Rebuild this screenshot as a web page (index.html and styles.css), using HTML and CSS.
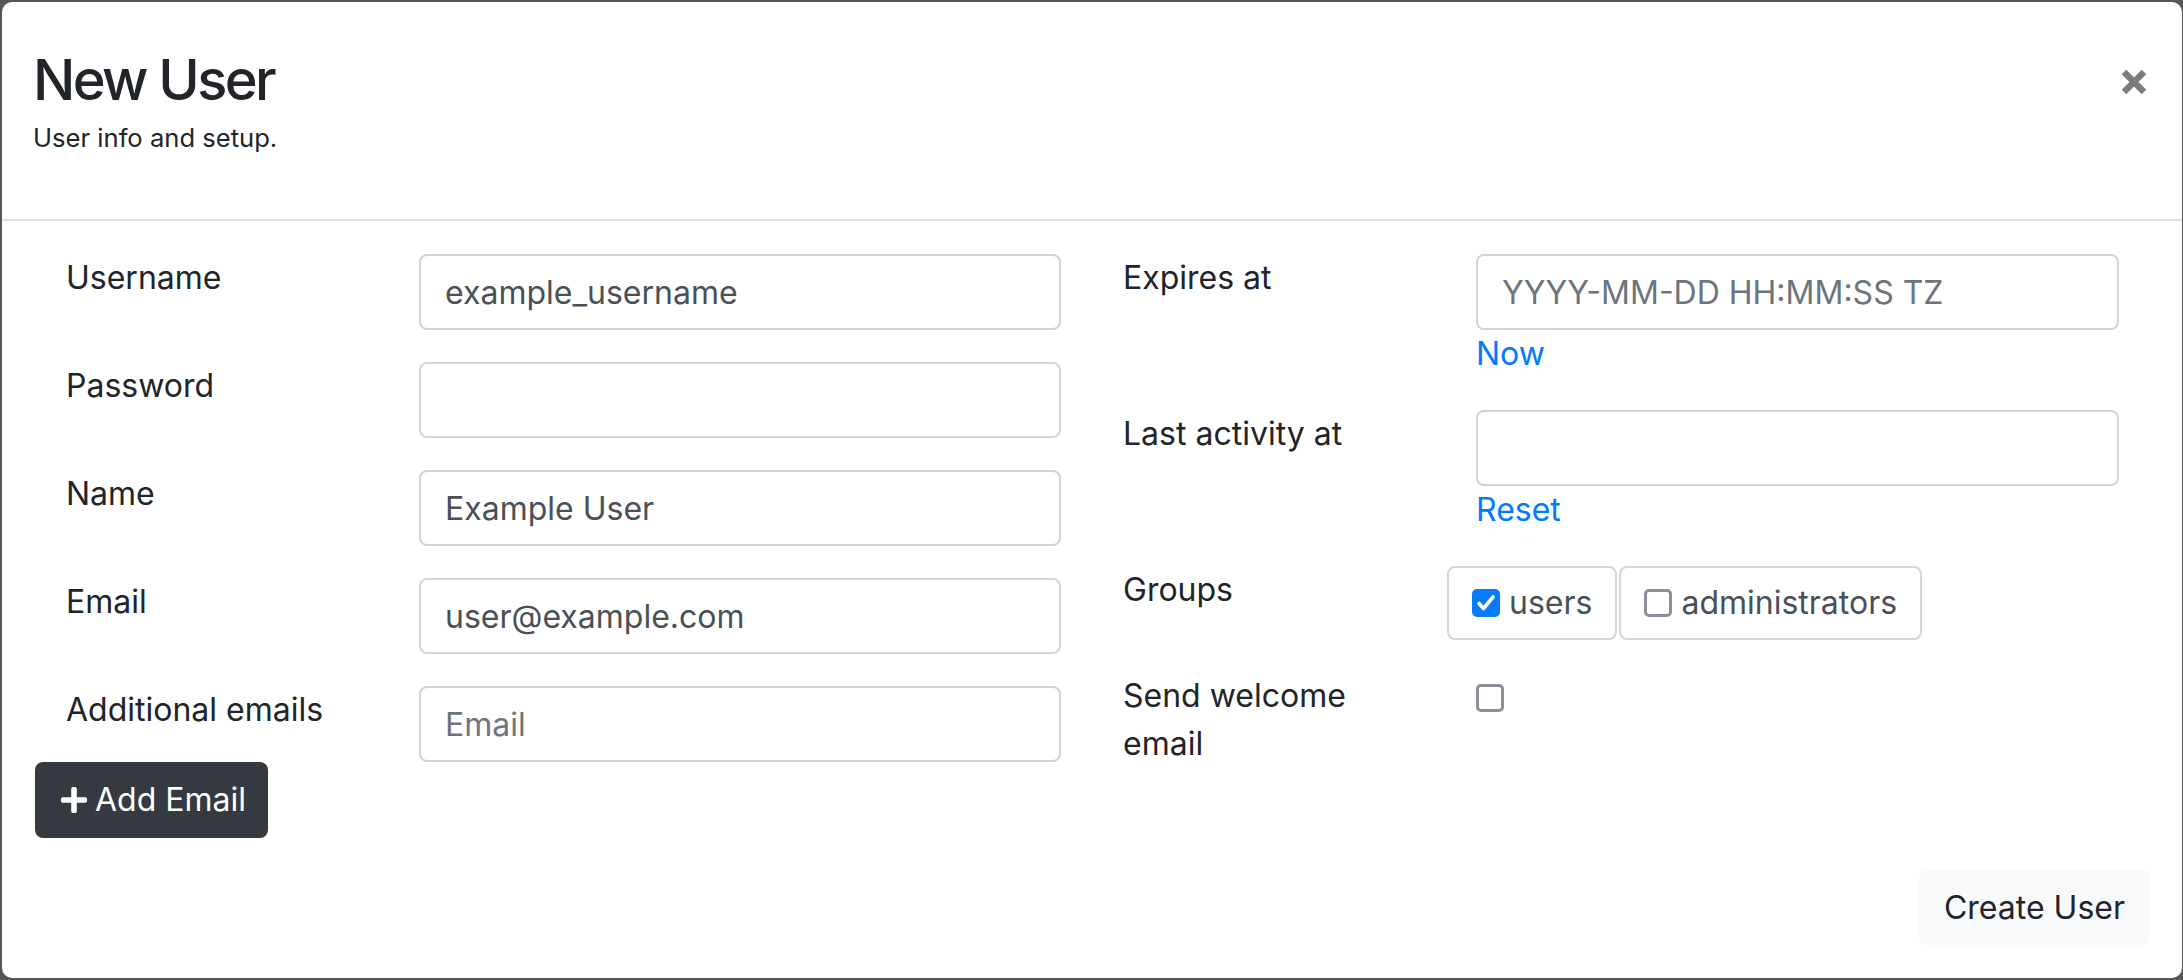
FILE: index.html
```html
<!DOCTYPE html>
<html lang="en">
<head>
<meta charset="utf-8">
<title>New User</title>
<link rel="stylesheet" href="styles.css">
</head>
<body>
<div class="modal">
  <header class="modal-header">
    <div class="titles">
      <h3 class="modal-title">New User</h3>
      <p class="subtitle">User info and setup.</p>
    </div>
    <button class="close" type="button" aria-label="Close">
      <svg width="26" height="26" viewBox="0 0 26 26"><path d="M3 3 L23 23 M23 3 L3 23" stroke="#7d7d7d" stroke-width="6.5" fill="none"/></svg>
    </button>
  </header>

  <div class="modal-body">
    <div class="form-cols">
      <div class="col">
        <div class="group">
          <label class="lbl">Username</label>
          <div class="field"><input class="input" type="text" value="example_username"></div>
        </div>
        <div class="group">
          <label class="lbl">Password</label>
          <div class="field"><input class="input" type="password" value=""></div>
        </div>
        <div class="group">
          <label class="lbl">Name</label>
          <div class="field"><input class="input" type="text" value="Example User"></div>
        </div>
        <div class="group">
          <label class="lbl">Email</label>
          <div class="field"><input class="input" type="text" value="user@example.com"></div>
        </div>
        <div class="group last">
          <label class="lbl">Additional emails</label>
          <div class="field"><input class="input" type="text" placeholder="Email"></div>
        </div>
        <button class="btn btn-dark" type="button">
          <svg class="plus" width="26" height="26" viewBox="0 32 448 448"><path fill="#fff" d="M416 208H272V64c0-17.67-14.33-32-32-32h-32c-17.67 0-32 14.33-32 32v144H32c-17.67 0-32 14.33-32 32v32c0 17.67 14.33 32 32 32h144v144c0 17.67 14.33 32 32 32h32c17.67 0 32-14.33 32-32V304h144c17.67 0 32-14.33 32-32v-32c0-17.67-14.33-32-32-32z"/></svg>
          <span>Add Email</span>
        </button>
      </div>

      <div class="col">
        <div class="group">
          <label class="lbl">Expires at</label>
          <div class="field">
            <input class="input" type="text" placeholder="YYYY-MM-DD HH:MM:SS TZ">
            <a class="link" href="#">Now</a>
          </div>
        </div>
        <div class="group">
          <label class="lbl">Last activity at</label>
          <div class="field">
            <input class="input" type="text" value="">
            <a class="link" href="#">Reset</a>
          </div>
        </div>
        <div class="group">
          <label class="lbl">Groups</label>
          <div class="field">
            <div class="chips">
              <label class="chip">
                <span class="cb checked"><svg width="28" height="28" viewBox="0 0 28 28"><path d="M7 14.5 L11.5 19.5 L21 8" stroke="#fff" stroke-width="3.6" fill="none" stroke-linecap="round" stroke-linejoin="round"/></svg></span>
                <span>users</span>
              </label>
              <label class="chip">
                <span class="cb"></span>
                <span>administrators</span>
              </label>
            </div>
          </div>
        </div>
        <div class="group">
          <label class="lbl">Send welcome email</label>
          <div class="field">
            <span class="cb single"></span>
          </div>
        </div>
      </div>
    </div>
  </div>

  <footer class="modal-footer">
    <button class="btn btn-light" type="button">Create User</button>
  </footer>
</div>
</body>
</html>
```

FILE: styles.css
```css
* {
  box-sizing: border-box;
}

html, body {
  margin: 0;
  height: 980px;
}

body {
  background: #565656;
  padding: 2px 1px 2px 2px;
  font-family: "Inter", "Noto Sans", sans-serif;
  font-size: 32px;
  line-height: 48px;
  color: #212529;
  overflow: hidden;
}

.modal {
  background: #fff;
  border-radius: 10px;
  height: 976px;
  display: flex;
  flex-direction: column;
}

.modal-header {
  flex: none;
  display: flex;
  justify-content: space-between;
  align-items: flex-start;
  height: 219px;
  padding: 45px 35px 0 31px;
  border-bottom: 2px solid #dee2e6;
}

.modal-title {
  margin: 0;
  font-size: 56px;
  line-height: 67px;
  font-weight: 500;
  letter-spacing: -2.6px;
  color: #212529;
}

.subtitle {
  margin: 5px 0 0;
  font-size: 25.6px;
  line-height: 38px;
  color: #212529;
}

.close {
  margin-top: 22px;
  padding: 0;
  border: 0;
  background: none;
  width: 26px;
  height: 26px;
  display: block;
}

.close svg {
  display: block;
}

.modal-body {
  flex: none;
  padding: 33px 0 32px 62px;
}

.form-cols {
  display: grid;
  grid-template-columns: 997px 998px;
  column-gap: 60px;
}

.col {
  display: flex;
  flex-direction: column;
}

.group {
  display: grid;
  grid-template-columns: 355px 1fr;
  margin-bottom: 32px;
}

.group.last {
  margin-bottom: 0;
}

.lbl {
  display: block;
  padding-left: 2px;
  padding-right: 62px;
}

.field {
  display: flex;
  flex-direction: column;
  align-items: flex-start;
}

.input {
  width: 100%;
  height: 76px;
  padding: 12px 24px;
  border: 2px solid #ced4da;
  border-radius: 8px;
  font-family: "Inter", "Noto Sans", sans-serif;
  font-size: 32px;
  line-height: 48px;
  color: #495057;
  background: #fff;
  outline: none;
}

.input::placeholder {
  color: #6c757d;
}

.link {
  color: #007bff;
  text-decoration: none;
  line-height: 48px;
}

.chips {
  display: flex;
  gap: 2px;
  margin-left: -29px;
}

.chip {
  display: flex;
  align-items: center;
  gap: 9px;
  height: 74px;
  padding: 0 23px 0 23px;
  border: 2px solid #d3d8de;
  border-radius: 8px;
  color: #495057;
}

.cb {
  display: inline-block;
  width: 28px;
  height: 28px;
  border: 3px solid #8e8d99;
  border-radius: 5px;
  background: #fff;
  flex: none;
}

.cb.checked {
  border: 0;
  background: #0a7bf7;
}

.cb svg {
  display: block;
}

.cb.single {
  margin-top: 12px;
}

.btn {
  font-family: "Inter", "Noto Sans", sans-serif;
  font-size: 32px;
  line-height: 48px;
  height: 76px;
  border-radius: 8px;
  display: inline-flex;
  align-items: center;
  cursor: pointer;
}

.btn-dark {
  align-self: flex-start;
  margin-left: -29px;
  gap: 8px;
  padding: 0 20px 0 24px;
  border: 2px solid #343a40;
  background: #343a40;
  color: #fff;
}

.plus {
  display: block;
}

.modal-footer {
  flex: none;
  display: flex;
  justify-content: flex-end;
  padding: 0 32px 0 0;
}

.btn-light {
  height: 75px;
  padding: 0 23px;
  border: 2px solid #f8f9fa;
  background: #f8f9fa;
  color: #212529;
}
```
